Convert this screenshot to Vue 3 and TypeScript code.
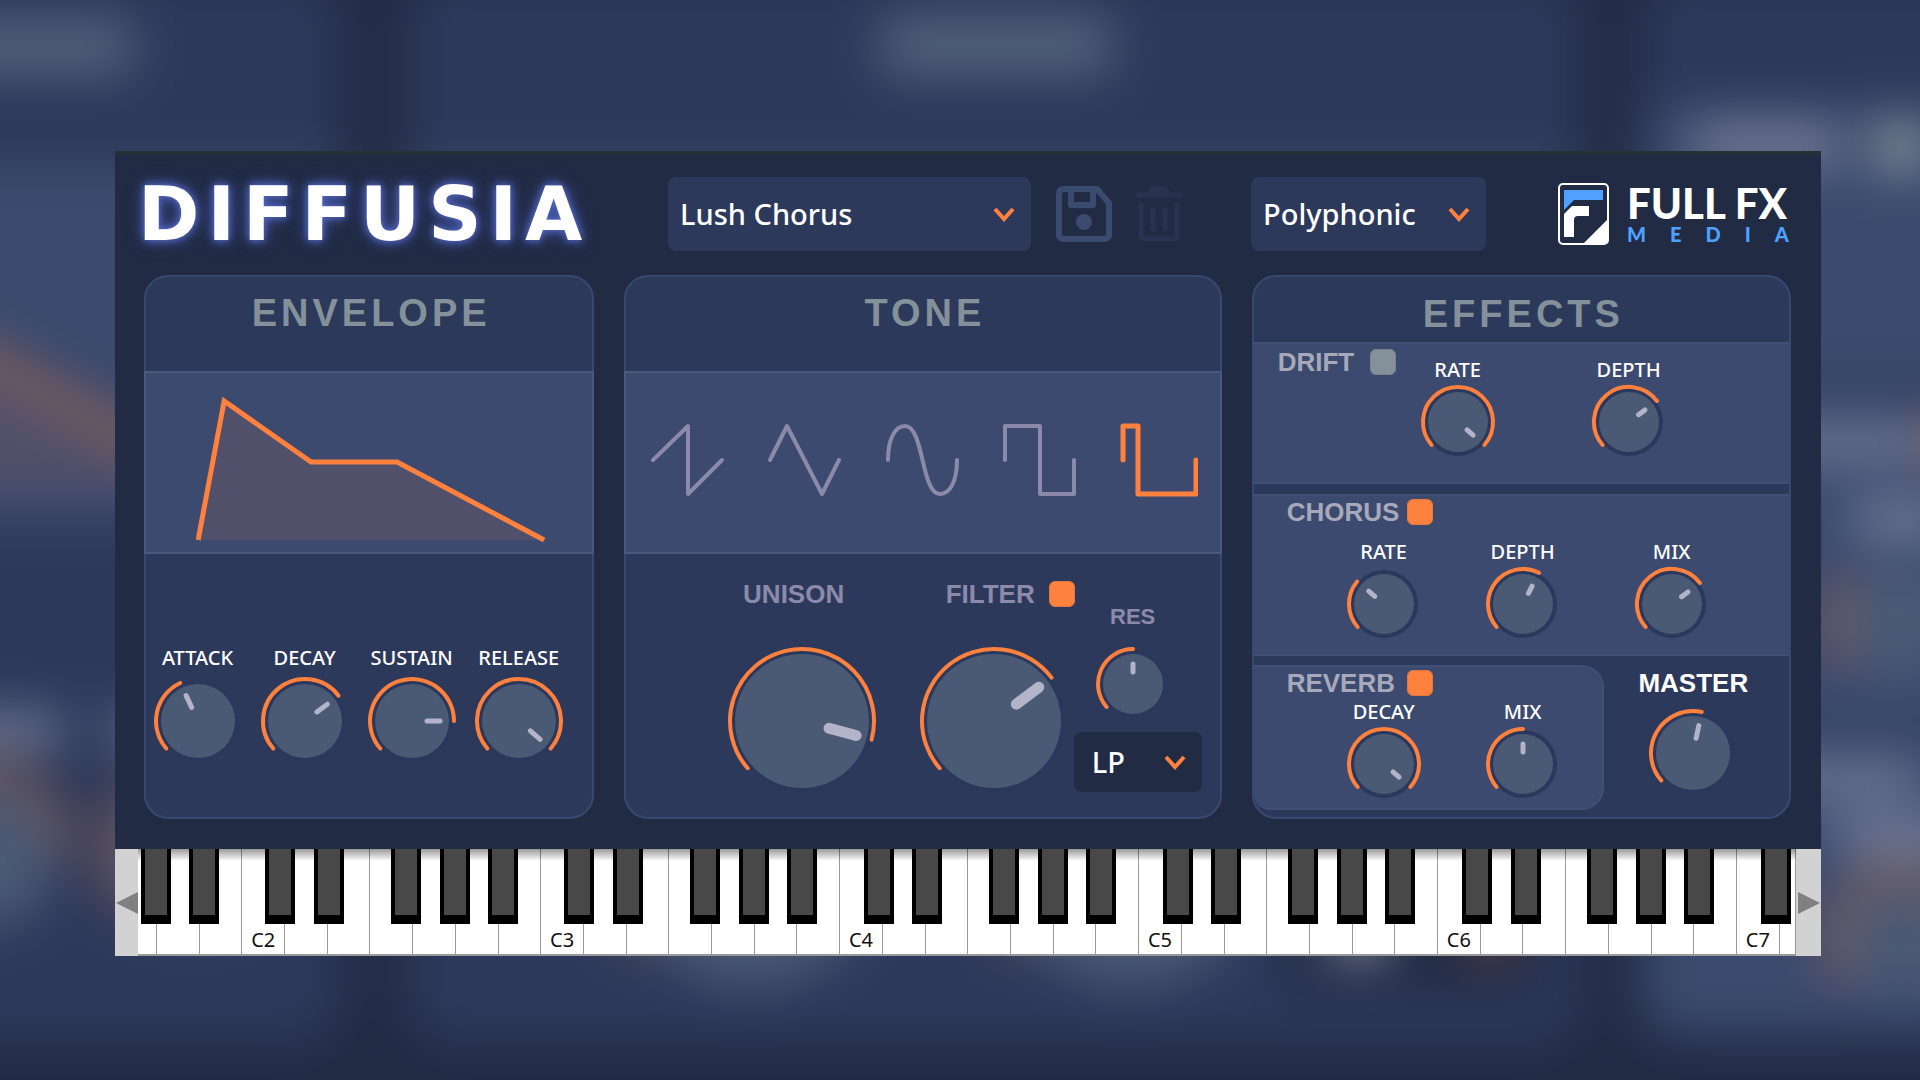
<script setup lang="ts">
import { h, reactive, ref, type FunctionalComponent } from 'vue'

type DialSize = 'sm' | 'md' | 'lg'

interface Dial {
  id: string
  label: string
  size: DialSize
  angle: number
}

const SWEEP = 131

const geometry: Record<DialSize, { box: number; body: number; inner: number; outer: number; width: number }> = {
  sm: { box: 76, body: 30, inner: 12, outer: 20, width: 5 },
  md: { box: 92, body: 37, inner: 15, outer: 28, width: 5 },
  lg: { box: 152, body: 67, inner: 28, outer: 56, width: 11 },
}

// Point at a radius and an angle measured clockwise from twelve o'clock.
function polar(radius: number, angle: number): string {
  const a = (angle * Math.PI) / 180
  return `${(radius * Math.sin(a)).toFixed(2)} ${(-radius * Math.cos(a)).toFixed(2)}`
}

const DialFace: FunctionalComponent<{ size: DialSize; angle: number }> = (props) => {
  const g = geometry[props.size]
  const r = g.body + 5
  const large = props.angle + SWEEP > 180 ? 1 : 0
  const half = g.box / 2
  return h(
    'svg',
    { width: g.box, height: g.box, viewBox: `${-half} ${-half} ${g.box} ${g.box}`, 'aria-hidden': 'true' },
    [
      h('circle', { r: g.body + 4, fill: '#2c385b' }),
      h('circle', { r: g.body, fill: '#4a5974' }),
      h('path', {
        d: `M${polar(r, -SWEEP)} A${r} ${r} 0 ${large} 1 ${polar(r, props.angle)}`,
        fill: 'none',
        stroke: '#ff813d',
        'stroke-width': 4,
        'stroke-linecap': 'round',
      }),
      h('path', {
        d: `M${polar(g.inner, props.angle)} L${polar(g.outer, props.angle)}`,
        stroke: '#b3b3c9',
        'stroke-width': g.width,
        'stroke-linecap': 'round',
      }),
    ],
  )
}
DialFace.props = ['size', 'angle']

const envelope = reactive<Dial[]>([
  { id: 'attack', label: 'ATTACK', size: 'md', angle: -25 },
  { id: 'decay', label: 'DECAY', size: 'md', angle: 53 },
  { id: 'sustain', label: 'SUSTAIN', size: 'md', angle: 90 },
  { id: 'release', label: 'RELEASE', size: 'md', angle: SWEEP },
])
const drift = reactive<Dial[]>([
  { id: 'drift-rate', label: 'RATE', size: 'sm', angle: SWEEP },
  { id: 'drift-depth', label: 'DEPTH', size: 'sm', angle: 53 },
])
const chorus = reactive<Dial[]>([
  { id: 'chorus-rate', label: 'RATE', size: 'sm', angle: -50 },
  { id: 'chorus-depth', label: 'DEPTH', size: 'sm', angle: 27 },
  { id: 'chorus-mix', label: 'MIX', size: 'sm', angle: 53 },
])
const reverb = reactive<Dial[]>([
  { id: 'reverb-decay', label: 'DECAY', size: 'sm', angle: SWEEP },
  { id: 'reverb-mix', label: 'MIX', size: 'sm', angle: 0 },
])
const unison = ref(105)
const cutoff = ref(53)
const resonance = ref(0)
const master = ref(12)

const filterOn = ref(true)
const driftOn = ref(false)
const chorusOn = ref(true)
const reverbOn = ref(true)

const preset = ref('Lush Chorus')
const voicing = ref('Polyphonic')
const filterType = ref('LP')

const waves = [
  { name: 'Saw', d: 'M5 39 L40 5 V73 L74 39' },
  { name: 'Triangle', d: 'M5 39 L22 5 L57 73 L74 39' },
  { name: 'Sine', d: 'M5 39 C5 18 12 5 22 5 C41 5 38 73 57 73 C67 73 74 60 74 39' },
  { name: 'Square', d: 'M5 39 V5 H40 V73 H74 V39' },
  { name: 'Pulse', d: 'M5 39 V5 H20 V73 H78 V39' },
]
const wave = ref('Pulse')

// Keyboard: widths and positions are counted in white keys.
const FIRST = 0.43
const LAST = 0.37
const whiteKeys = Array.from({ length: 40 }, (_, i) => {
  const k = i - 3
  return {
    note: k >= 0 && k % 7 === 0 ? `C${2 + k / 7}` : '',
    span: i === 0 ? FIRST : i === 39 ? LAST : 1,
  }
})
const total = whiteKeys.reduce((sum, key) => sum + key.span, 0)
const blackOffsets = [0.55, 1.69, 3.48, 4.63, 5.76]
const blackKeys: number[] = []
for (let octave = -1; octave <= 5; octave++) {
  for (const offset of blackOffsets) {
    const at = FIRST + 2 + octave * 7 + offset
    if (at > 0 && at + 0.7 < total) blackKeys.push((at / total) * 100)
  }
}
</script>

<template>
  <div class="page">
    <svg class="backdrop" viewBox="0 0 1568 882" preserveAspectRatio="xMidYMid slice" aria-hidden="true">
      <g class="haze">
        <g transform="translate(-677 -465) scale(1.973)">
          <rect x="50" y="100" width="1500" height="900" fill="#222b44" />
          <rect x="118" y="225" width="367" height="443" rx="20" fill="#2d395b" />
          <rect x="511" y="225" width="487" height="443" rx="20" fill="#2d395b" />
          <rect x="1023" y="225" width="439" height="443" rx="20" fill="#2d395b" />
          <rect x="118" y="304" width="367" height="147" fill="#3b4a6e" />
          <rect x="511" y="304" width="487" height="147" fill="#3b4a6e" />
          <rect x="1023" y="280" width="439" height="115" fill="#3b4a6e" />
          <rect x="1023" y="403" width="439" height="132" fill="#3b4a6e" />
          <rect x="1023" y="543" width="287" height="118" fill="#3b4a6e" />
          <path d="M162 440 L183 326 L254 377 H325 L443 440 Z" fill="#51506a" />
          <path d="M162 440 L183 326 L254 377 H325 L443 440" fill="none" stroke="#ff813d" stroke-width="4" />
          <rect x="206" y="243" width="192" height="24" fill="#52617a" />
          <rect x="708" y="242" width="95" height="25" fill="#52617a" />
          <rect x="1044" y="287" width="61" height="17" fill="#7a7f9b" />
          <rect x="1119" y="285" width="22" height="22" fill="#84919a" />
          <rect x="1052" y="410" width="90" height="17" fill="#6f7793" />
          <rect x="1052" y="549" width="86" height="17" fill="#6f7793" />
          <rect x="1110" y="444" width="40" height="13" fill="#7f88a2" />
          <rect x="1103" y="575" width="54" height="13" fill="#7f88a2" />
          <rect x="1149" y="407" width="22" height="22" fill="#ff813d" />
          <rect x="303" y="532" width="66" height="12" fill="#7f88a2" />
          <rect x="390" y="532" width="66" height="12" fill="#7f88a2" />
          <g fill="#4a5974">
            <circle cx="336" cy="589" r="31" />
            <circle cx="423" cy="589" r="31" />
            <circle cx="654" cy="589" r="55" />
            <circle cx="811" cy="589" r="55" />
            <circle cx="1130" cy="493" r="25" />
            <circle cx="1130" cy="624" r="25" />
          </g>
          <g fill="none" stroke="#ff813d" stroke-width="3">
            <path d="M310 611 A34 34 0 1 1 370 589" />
            <path d="M397 611 A34 34 0 1 1 449 611" />
            <path d="M610 627 A58 58 0 1 1 711 604" />
            <path d="M767 627 A58 58 0 0 1 857 553" />
            <path d="M1108 511 A28 28 0 0 1 1108 475" />
            <path d="M1108 642 A28 28 0 1 1 1152 642" />
          </g>
          <rect x="877" y="598" width="105" height="48" fill="#222b44" />
          <rect x="893" y="615" width="25" height="17" fill="#8a90a4" />
          <path d="M952 618 L960 627 L968 618" fill="none" stroke="#ff813d" stroke-width="4" />
        </g>
      </g>
    </svg>

    <main class="synth">
      <header class="top">
        <h1 class="title">DIFFUSIA</h1>
        <div class="picker preset">
          <select v-model="preset" aria-label="Preset">
            <option>Lush Chorus</option>
          </select>
          <svg class="chevron" width="24" height="18" viewBox="0 0 24 18" aria-hidden="true"><path d="M3 3 L12 13 L21 3" /></svg>
        </div>
        <button class="icon save" type="button" aria-label="Save preset">
          <svg width="56" height="56" viewBox="0 0 56 56" fill="none" stroke="#3b4a6f" stroke-width="6" aria-hidden="true">
            <path d="M8 3 H41 L53 17 V48 Q53 53 48 53 H8 Q3 53 3 48 V8 Q3 3 8 3 Z" stroke-linejoin="round" />
            <path d="M15 3 V19 H37 V3" stroke-linejoin="round" />
            <circle cx="28" cy="36" r="8" fill="#3b4a6f" stroke="none" />
          </svg>
        </button>
        <button class="icon trash" type="button" aria-label="Delete preset" disabled>
          <svg width="48" height="56" viewBox="0 0 48 56" fill="none" stroke="#293350" stroke-width="5" stroke-linecap="round" aria-hidden="true">
            <path d="M13 8 L15 2 Q16 0 18 0 H30 Q32 0 33 2 L35 8 Z" fill="#293350" stroke="none" />
            <path d="M3 9 H45" />
            <path d="M6 17 V49 Q6 53 10 53 H38 Q42 53 42 49 V17" stroke-linecap="butt" />
            <path d="M18 24 V43 M30 24 V43" />
          </svg>
        </button>
        <div class="picker voicing">
          <select v-model="voicing" aria-label="Voicing">
            <option>Polyphonic</option>
          </select>
          <svg class="chevron" width="24" height="18" viewBox="0 0 24 18" aria-hidden="true"><path d="M3 3 L12 13 L21 3" /></svg>
        </div>
        <div class="brand">
          <svg width="51" height="62" viewBox="0 0 51 62" aria-hidden="true">
            <rect x="1" y="1" width="49" height="60" rx="4" fill="none" stroke="#fff" stroke-width="2" />
            <path d="M6 7 H45 V17 H16 L6 27 Z" fill="#4fa0ff" />
            <path d="M6 31 L14 23 H31 V33 H20 Q16 33 16 37 V54 H6 Z" fill="#fff" />
            <path d="M50 36 V57 Q50 61 46 61 H25 Z" fill="#fff" />
          </svg>
          <div class="brand-text">
            <span class="brand-name">FULL FX</span>
            <span class="brand-sub">MEDIA</span>
          </div>
        </div>
      </header>

      <div class="panels">
        <section class="panel">
          <h2>ENVELOPE</h2>
          <div class="screen">
            <svg class="curve" viewBox="0 0 446 179" aria-hidden="true">
              <path d="M52 167 L78 28 L165 89 H251 L398 167 Z" fill="#51506a" />
              <path d="M52 167 L78 28 L165 89 H251 L398 167" fill="none" stroke="#ff813d" stroke-width="5" />
            </svg>
          </div>
          <div class="adsr">
            <label v-for="dial in envelope" :key="dial.id" class="dial md">
              <span>{{ dial.label }}</span>
              <DialFace :size="dial.size" :angle="dial.angle" />
              <input v-model.number="dial.angle" type="range" :min="-SWEEP" :max="SWEEP" />
            </label>
          </div>
        </section>

        <section class="panel">
          <h2>TONE</h2>
          <div class="screen waves">
            <button
              v-for="w in waves"
              :key="w.name"
              class="wave"
              :class="{ active: w.name === wave }"
              type="button"
              :aria-label="w.name"
              :aria-pressed="w.name === wave"
              @click="wave = w.name"
            >
              <svg width="80" height="78" viewBox="0 0 80 78" aria-hidden="true"><path :d="w.d" /></svg>
            </button>
          </div>
          <div class="tone-controls">
            <label class="dial lg">
              <span class="heading unison-label">UNISON</span>
              <DialFace size="lg" :angle="unison" />
              <input v-model.number="unison" type="range" :min="-SWEEP" :max="SWEEP" />
            </label>
            <div class="filter">
              <label class="switch filter-switch">
                <span class="heading">FILTER</span>
                <input v-model="filterOn" type="checkbox" />
              </label>
              <label class="dial lg">
                <DialFace size="lg" :angle="cutoff" />
                <input v-model.number="cutoff" type="range" aria-label="Filter cutoff" :min="-SWEEP" :max="SWEEP" />
              </label>
            </div>
            <div class="res">
              <label class="dial sm">
                <span>RES</span>
                <DialFace size="sm" :angle="resonance" />
                <input v-model.number="resonance" type="range" :min="-SWEEP" :max="SWEEP" />
              </label>
              <div class="picker filter-type">
                <select v-model="filterType" aria-label="Filter type">
                  <option>LP</option>
                </select>
                <svg class="chevron" width="24" height="18" viewBox="0 0 24 18" aria-hidden="true"><path d="M3 3 L12 13 L21 3" /></svg>
              </div>
            </div>
          </div>
        </section>

        <section class="panel effects">
          <h2>EFFECTS</h2>
          <div class="band drift">
            <label class="switch">
              <span class="heading">DRIFT</span>
              <input v-model="driftOn" type="checkbox" />
            </label>
            <label v-for="dial in drift" :key="dial.id" class="dial sm">
              <span>{{ dial.label }}</span>
              <DialFace :size="dial.size" :angle="dial.angle" />
              <input v-model.number="dial.angle" type="range" :min="-SWEEP" :max="SWEEP" />
            </label>
          </div>
          <div class="band chorus">
            <label class="switch">
              <span class="heading">CHORUS</span>
              <input v-model="chorusOn" type="checkbox" />
            </label>
            <div class="band-dials">
              <label v-for="dial in chorus" :key="dial.id" class="dial sm">
                <span>{{ dial.label }}</span>
                <DialFace :size="dial.size" :angle="dial.angle" />
                <input v-model.number="dial.angle" type="range" :min="-SWEEP" :max="SWEEP" />
              </label>
            </div>
          </div>
          <div class="last-row">
            <div class="band reverb">
              <label class="switch">
                <span class="heading">REVERB</span>
                <input v-model="reverbOn" type="checkbox" />
              </label>
              <div class="band-dials">
                <label v-for="dial in reverb" :key="dial.id" class="dial sm">
                  <span>{{ dial.label }}</span>
                  <DialFace :size="dial.size" :angle="dial.angle" />
                  <input v-model.number="dial.angle" type="range" :min="-SWEEP" :max="SWEEP" />
                </label>
              </div>
            </div>
            <label class="dial md master">
              <span class="heading">MASTER</span>
              <DialFace size="md" :angle="master" />
              <input v-model.number="master" type="range" :min="-SWEEP" :max="SWEEP" />
            </label>
          </div>
        </section>
      </div>

      <div class="piano">
        <button class="scroll" type="button" aria-label="Lower octaves">
          <svg width="22" height="22" viewBox="0 0 22 22" aria-hidden="true"><path d="M0 11 L22 0 V22 Z" fill="#808080" /></svg>
        </button>
        <div class="keys">
          <button v-for="(key, i) in whiteKeys" :key="i" class="white" type="button" :style="{ flexGrow: key.span }">{{ key.note }}</button>
          <div class="shade"></div>
          <button v-for="left in blackKeys" :key="left" class="black" type="button" aria-label="Black key" :style="{ left: left + '%' }"></button>
        </div>
        <button class="scroll" type="button" aria-label="Higher octaves">
          <svg width="22" height="22" viewBox="0 0 22 22" aria-hidden="true"><path d="M22 11 L0 0 V22 Z" fill="#808080" /></svg>
        </button>
      </div>
    </main>
  </div>
</template>

<style>
body {
  background: #2d395b;
}
</style>

<style scoped>
* {
  box-sizing: border-box;
}
.page {
  position: relative;
  min-height: 100vh;
  padding: 151px 99px 0 115px;
  overflow: hidden;
  font-family: "Noto Sans", sans-serif;
  color: #fff;
}
.backdrop {
  position: absolute;
  inset: 0;
  width: 100%;
  height: 100%;
}
.haze {
  filter: blur(20px);
}
.synth {
  position: relative;
  border-top: 4px solid #243238;
  background: #222b44;
}
button {
  padding: 0;
  border: 0;
  background: none;
  font: inherit;
}
svg {
  display: block;
}

.top {
  display: flex;
  align-items: center;
  padding: 22px 33px 24px 23px;
}
.title {
  flex: 1;
  margin: 0;
  font: 700 74px/74px "DejaVu Sans", sans-serif;
  letter-spacing: 8px;
  white-space: nowrap;
  text-shadow: 0 0 6px #5468c0, 0 0 12px #4a5cb0, 0 0 18px #3a4a8c;
}
.picker {
  position: relative;
  flex: none;
  height: 74px;
  border-radius: 8px;
  background: #2d395b;
}
.picker select {
  width: 100%;
  height: 100%;
  padding: 0 48px 0 12px;
  border: 0;
  appearance: none;
  background: none;
  color: #fff;
  font: 500 29px/40px "Noto Sans", sans-serif;
}
.chevron {
  position: absolute;
  top: 50%;
  right: 15px;
  margin-top: -8px;
  pointer-events: none;
  fill: none;
  stroke: #ff813d;
  stroke-width: 4px;
}
.preset {
  width: 363px;
}
.voicing {
  width: 235px;
}
.save {
  margin-left: 25px;
}
.trash {
  margin: 0 68px 0 23px;
}
.brand {
  display: flex;
  gap: 18px;
  width: 230px;
  margin-left: 72px;
  font-family: Lato, sans-serif;
  font-weight: 900;
  white-space: nowrap;
}
.brand-text {
  display: flex;
  flex-direction: column;
  width: 160px;
}
.brand-name {
  font-size: 42px;
  line-height: 40px;
}
.brand-sub {
  color: #4fa0ff;
  font-size: 20px;
  line-height: 22px;
  letter-spacing: 24px;
}

.panels {
  display: grid;
  grid-template-columns: 450fr 597fr 539fr;
  gap: 30px;
  padding: 0 30px 30px 29px;
}
.panel {
  min-width: 0;
  height: 544px;
  border: 2px solid #384870;
  border-radius: 24px;
  background: #2d395b;
}
h2 {
  height: 94px;
  margin: 0;
  padding: 12px 0 0 4px;
  color: #84919a;
  font: 700 38px/48px "Liberation Sans", sans-serif;
  letter-spacing: 4px;
  text-align: center;
}
.screen {
  height: 183px;
  margin: 0 -2px;
  border: 2px solid #4a587d;
  background: #3b4a6e;
}
.curve {
  width: 100%;
  height: 100%;
}
.heading {
  font: 700 26px/28px "Liberation Sans", sans-serif;
}

.dial {
  position: relative;
  display: flex;
  flex-direction: column;
  align-items: center;
  font-size: 20px;
  font-weight: 500;
  line-height: 24px;
}
.dial input {
  position: absolute;
  bottom: 0;
  left: 0;
  width: 100%;
  height: 76px;
  margin: 0;
  opacity: 0;
  cursor: pointer;
}
.dial.sm {
  gap: 2px;
  width: 76px;
}
.dial.md {
  gap: 5px;
}
.dial.lg {
  gap: 37px;
  width: 152px;
}
.adsr {
  display: grid;
  grid-template-columns: repeat(4, 1fr);
  margin-left: -2px;
  padding: 92px 20px 0 0;
}

.waves {
  display: grid;
  grid-template-columns: repeat(5, 1fr);
  padding: 0 3px 5px;
}
.wave {
  display: flex;
  align-items: center;
  justify-content: center;
  cursor: pointer;
}
.wave path {
  fill: none;
  stroke: #8c8aaa;
  stroke-width: 4px;
  stroke-linecap: round;
  stroke-linejoin: round;
}
.wave.active path {
  stroke: #ff813d;
  stroke-width: 5px;
}
.tone-controls {
  display: flex;
  justify-content: flex-end;
  padding: 26px 18px 0 0;
  color: #8c8aaa;
}
.unison-label {
  padding-right: 16px;
}
.filter {
  display: flex;
  flex-direction: column;
  gap: 37px;
  width: 152px;
  margin: 0 4px 0 40px;
}
.switch {
  display: flex;
  align-items: center;
  height: 28px;
}
.switch input {
  flex: none;
  width: 26px;
  height: 26px;
  margin: 0;
  border: 1px solid #7a8588;
  border-radius: 6px;
  appearance: none;
  background: #84919a;
  cursor: pointer;
}
.switch input:checked {
  border-color: #e0783f;
  background: #ff813d;
}
.filter-switch {
  gap: 14px;
  margin: 0 -8px 0 28px;
}
.res {
  display: flex;
  flex-direction: column;
  gap: 10px;
  width: 128px;
  padding-top: 25px;
}
.res .dial {
  gap: 17px;
  margin-left: 21px;
  font: 700 22px/24px "Liberation Sans", sans-serif;
}
.filter-type {
  height: 60px;
  background: #222b44;
}
.filter-type select {
  padding-left: 18px;
}

.effects h2 {
  height: 65px;
  padding-top: 13px;
}
.band {
  border: solid #3f4f76;
  border-width: 2px 0;
  background: #3b4a6e;
}
.band .heading {
  color: #a7a9bb;
}
.drift {
  display: flex;
  height: 142px;
  padding: 14px 0 0 24px;
}
.drift .switch {
  width: 142px;
  margin-top: -10px;
}
.drift .heading {
  width: 92px;
}
.drift .dial + .dial {
  margin-left: 95px;
}
.chorus {
  height: 162px;
  margin-top: 10px;
  padding: 2px 0 0 33px;
}
.chorus .heading,
.reverb .heading {
  width: 120px;
}
.band-dials {
  display: grid;
  grid-template-columns: 139px 149px 76px;
  padding: 14px 0 0 59px;
}
.last-row {
  display: flex;
  margin-top: 9px;
}
.reverb {
  flex: none;
  width: 350px;
  height: 145px;
  padding: 2px 0 0 33px;
  border-right-width: 2px;
  border-radius: 0 22px 22px 16px;
}
.reverb .band-dials {
  grid-template-columns: 139px 76px;
  padding-top: 3px;
}
.master {
  flex: 1;
  padding: 4px 6px 0 0;
}
.dial.master {
  gap: 10px;
}
.master .heading {
  color: #fff;
}

.piano {
  display: flex;
  height: 107px;
}
.scroll {
  display: flex;
  flex: none;
  align-items: center;
  justify-content: center;
  width: 25px;
  background: #d2d2d2;
}
.scroll:first-child {
  width: 23px;
}
.keys {
  position: relative;
  display: flex;
  flex: 1;
  overflow: hidden;
  background: #fff;
}
.white {
  display: flex;
  flex: 1 1 0;
  align-items: flex-end;
  justify-content: center;
  min-width: 0;
  padding-bottom: 2px;
  border: solid #999;
  border-width: 0 1px 2px 0;
  color: #111;
  font-size: 20px;
  font-weight: 400;
  line-height: 24px;
}
.shade {
  position: absolute;
  top: 0;
  left: 0;
  width: 100%;
  height: 12px;
  background: linear-gradient(#0006, #0000);
}
.black {
  position: absolute;
  top: 0;
  width: 30px;
  height: 75px;
  border: solid #000;
  border-width: 0 4px 9px;
  background: #484848;
}
</style>
